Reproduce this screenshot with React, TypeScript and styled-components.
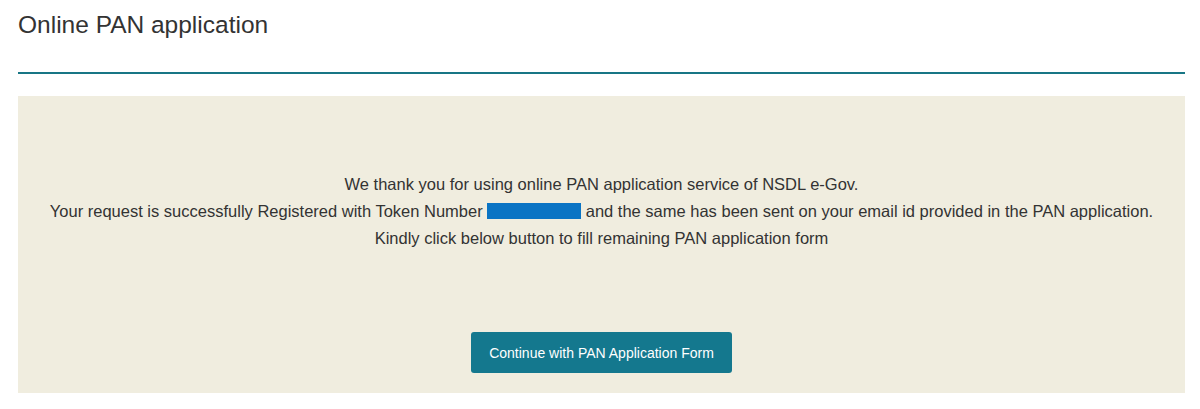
import React from 'react';
import styled, { createGlobalStyle } from 'styled-components';

const GlobalStyle = createGlobalStyle`
  body {
    margin: 0;
    background: #fff;
    font-family: "Liberation Sans", Arial, sans-serif;
    color: #333;
  }
`;

const Page = styled.div`
  padding: 0 15px 0 18px;
`;

const Title = styled.h1`
  margin: 0;
  padding-top: 8px;
  font-size: 24.5px;
  font-weight: 400;
  line-height: 34px;
  color: #333;
  height: 64px;
  border-bottom: 2px solid #187685;
`;

const Panel = styled.div`
  margin-top: 22px;
  background: #f0eddf;
  padding: 75px 0 20px;
  display: flex;
  flex-direction: column;
  align-items: center;
`;

const Message = styled.p`
  margin: 0;
  font-size: 16.5px;
  line-height: 27px;
  text-align: center;
  color: #333;
`;

const Token = styled.span`
  display: inline-block;
  vertical-align: middle;
  width: 94px;
  height: 16px;
  margin: -3px 5px 0 4px;
  background: #0a74c4;
`;

const ContinueButton = styled.button`
  margin-top: 80px;
  width: 261px;
  height: 41px;
  border: none;
  border-radius: 3px;
  background: #14788e;
  color: #fff;
  font-family: "Liberation Sans", Arial, sans-serif;
  font-size: 14px;
  cursor: pointer;
`;

export default function App() {
  return (
    <>
      <GlobalStyle />
      <Page>
        <Title>Online PAN application</Title>
        <Panel>
          <Message>
            We thank you for using online PAN application service of NSDL e-Gov.
            <br />
            Your request is successfully Registered with Token Number
            <Token />
            and the same has been sent on your email id provided in the PAN application.
            <br />
            Kindly click below button to fill remaining PAN application form
          </Message>
          <ContinueButton>Continue with PAN Application Form</ContinueButton>
        </Panel>
      </Page>
    </>
  );
}
